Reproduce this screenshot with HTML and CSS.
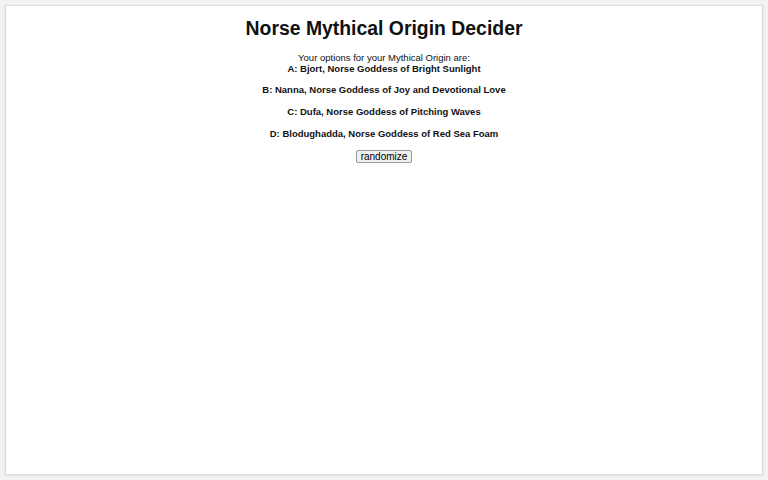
FILE: index.html
```html
<!DOCTYPE html>
<html lang="en">
<head>
  <meta charset="UTF-8" />
  <meta name="viewport" content="width=device-width, initial-scale=1.0"/>
  <title>Norse Mythical Origin Decider</title>
  <link rel="stylesheet" href="styles.css">
</head>
<body>
  <div class="page">
    <h1>Norse Mythical Origin Decider</h1>
    <div class="options">
      Your options for your Mythical Origin are:<br>
      <b>A: Bjort, Norse Goddess of Bright Sunlight</b><br><br>
      <b>B: Nanna, Norse Goddess of Joy and Devotional Love</b><br><br>
      <b>C: Dufa, Norse Goddess of Pitching Waves</b><br><br>
      <b>D: Blodughadda, Norse Goddess of Red Sea Foam</b>
    </div>
    <button id="randomize" onclick="randomize()">randomize</button>
  </div>

  <script>
    // pick one of the four options
    function randomize() {
      const picks = ["A", "B", "C", "D"];
      alert("Your origin is " + picks[Math.floor(Math.random() * 4)]);
    }
  </script>
</body>
</html>
```

FILE: styles.css
```css
body {
  font-family: "Liberation Sans", Arial, sans-serif;
  background: #f2f2f2;
  margin: 0;
  padding: 5px;
}

.page {
  background: white;
  border: 1px solid #dcdcdc;
  box-shadow: 0 1px 2px rgba(0,0,0,0.08);
  height: 468px;
  text-align: center;
}

h1 {
  font-size: 19.4px;
  margin: 11px 0 13px;
  color: #111;
}

.options {
  font-size: 9.5px;
  line-height: 10.8px;
  color: #111;
}

button {
  font-family: "Liberation Sans", Arial, sans-serif;
  font-size: 10px;
  margin-top: 11px;
  padding: 0 4px;
  background: #efefef;
  border: 1px solid #999;
  border-radius: 2px;
}
```
